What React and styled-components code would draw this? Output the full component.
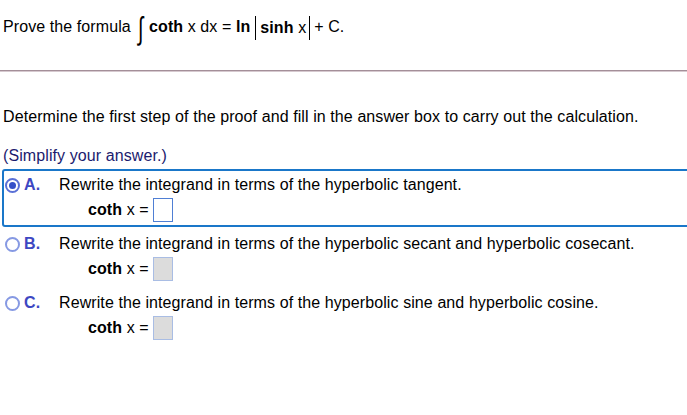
import styled, { createGlobalStyle } from "styled-components";

const GlobalStyle = createGlobalStyle`
    html, body {
        margin: 0;
        padding: 0;
        background: #fff;
        overflow: hidden;
    }
    body {
        font-family: "Liberation Sans", Arial, sans-serif;
        font-size: 16px;
        letter-spacing: 0.09px;
        color: #000;
    }
`;

const Page = styled.div`
    width: 687px;
    height: 415px;
`;

const Title = styled.div`
    height: 70px;
    display: flex;
    align-items: center;
    padding: 0 0 16px 3px;
    box-sizing: border-box;
    white-space: nowrap;
`;

const Integral = styled.span`
    font-family: "Liberation Sans", sans-serif;
    font-size: 26px;
    line-height: 1;
    margin: 0 5px 0 6px;
    display: inline-block;
    transform: scale(0.75, 1.2) translateY(1px);
`;

const B = styled.b`
    font-weight: bold;
`;

const Abs = styled.span`
    display: inline-flex;
    align-items: center;
    height: 24px;
    border-left: 1px solid #000;
    border-right: 1px solid #000;
    padding: 0 3px 0 4px;
    margin: 2px 4px 0 5px;
`;

const Divider = styled.div`
    height: 2px;
    background: linear-gradient(#a48f99 50%, #d6c9cf 50%);
`;

const Instruction = styled.p`
    margin: 35px 0 0;
    padding-left: 3px;
    line-height: 20px;
`;

const Hint = styled.p`
    margin: 19px 0 0;
    padding-left: 3px;
    line-height: 20px;
    color: #1b1b6e;
`;

const Options = styled.div`
    margin-top: 3px;
`;

const Option = styled.div`
    margin: 0 -20px 1px 2px;
    border: 2px solid ${(p) => (p.$selected ? "#1a77c9" : "transparent")};
    border-radius: 3px;
    padding: 4px 0 3px 1px;
`;

const ChoiceRow = styled.div`
    display: flex;
    align-items: center;
    height: 20px;
`;

const Radio = styled.span`
    width: 15px;
    height: 15px;
    box-sizing: border-box;
    border-radius: 50%;
    border: 2px solid ${(p) => (p.$checked ? "#5a70d6" : "#8699e3")};
    display: flex;
    align-items: center;
    justify-content: center;
    flex-shrink: 0;

    &::after {
        content: "";
        width: 7px;
        height: 7px;
        border-radius: 50%;
        background: #3550c8;
        display: ${(p) => (p.$checked ? "block" : "none")};
    }
`;

const Letter = styled.span`
    width: 35px;
    margin-left: 4px;
    font-weight: bold;
    color: #3d47c2;
`;

const AnswerRow = styled.div`
    display: flex;
    align-items: center;
    margin-top: 3px;
    padding-left: 83px;
    height: 24px;
`;

const AnswerBox = styled.span`
    width: 20px;
    height: 24px;
    box-sizing: border-box;
    margin-left: 4px;
    border: 1px solid ${(p) => (p.$active ? "#4f7fd4" : "#a9bde4")};
    background: ${(p) => (p.$active ? "#fff" : "#dcdcdc")};
`;

const choices = [
    { key: "A", text: "Rewrite the integrand in terms of the hyperbolic tangent." },
    { key: "B", text: "Rewrite the integrand in terms of the hyperbolic secant and hyperbolic cosecant." },
    { key: "C", text: "Rewrite the integrand in terms of the hyperbolic sine and hyperbolic cosine." },
];

function App() {
    const selected = "A";

    return (
        <Page>
            <GlobalStyle />
            <Title>
                Prove the formula
                <Integral>∫</Integral>
                <B>coth</B>&nbsp;x dx = <B>&nbsp;ln</B>
                <Abs>
                    <B>sinh</B>&nbsp;x
                </Abs>
                + C.
            </Title>
            <Divider />
            <Instruction>
                Determine the first step of the proof and fill in the answer box to carry out the calculation.
            </Instruction>
            <Hint>(Simplify your answer.)</Hint>
            <Options>
                {choices.map((c) => (
                    <Option key={c.key} $selected={c.key === selected}>
                        <ChoiceRow>
                            <Radio $checked={c.key === selected} />
                            <Letter>{c.key}.</Letter>
                            {c.text}
                        </ChoiceRow>
                        <AnswerRow>
                            <B>coth</B>&nbsp;x =
                            <AnswerBox $active={c.key === selected} />
                        </AnswerRow>
                    </Option>
                ))}
            </Options>
        </Page>
    );
}

export default App;
